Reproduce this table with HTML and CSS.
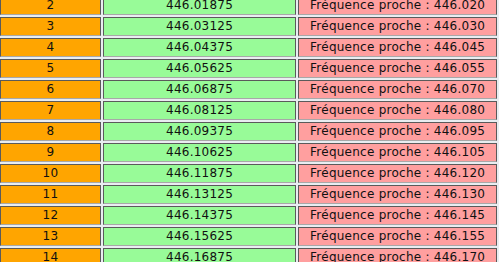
FILE: index.html
```html
<!DOCTYPE html>
<html lang="fr">
<head>
<meta charset="utf-8">
<title>Fréquences</title>
<link rel="stylesheet" href="styles.css">
</head>
<body>
<table class="freq">
<tbody>
<tr><td class="num">2</td><td class="val">446.01875</td><td class="near">Fréquence proche : 446.020</td></tr>
<tr><td class="num">3</td><td class="val">446.03125</td><td class="near">Fréquence proche : 446.030</td></tr>
<tr><td class="num">4</td><td class="val">446.04375</td><td class="near">Fréquence proche : 446.045</td></tr>
<tr><td class="num">5</td><td class="val">446.05625</td><td class="near">Fréquence proche : 446.055</td></tr>
<tr><td class="num">6</td><td class="val">446.06875</td><td class="near">Fréquence proche : 446.070</td></tr>
<tr><td class="num">7</td><td class="val">446.08125</td><td class="near">Fréquence proche : 446.080</td></tr>
<tr><td class="num">8</td><td class="val">446.09375</td><td class="near">Fréquence proche : 446.095</td></tr>
<tr><td class="num">9</td><td class="val">446.10625</td><td class="near">Fréquence proche : 446.105</td></tr>
<tr><td class="num">10</td><td class="val">446.11875</td><td class="near">Fréquence proche : 446.120</td></tr>
<tr><td class="num">11</td><td class="val">446.13125</td><td class="near">Fréquence proche : 446.130</td></tr>
<tr><td class="num">12</td><td class="val">446.14375</td><td class="near">Fréquence proche : 446.145</td></tr>
<tr><td class="num">13</td><td class="val">446.15625</td><td class="near">Fréquence proche : 446.155</td></tr>
<tr><td class="num">14</td><td class="val">446.16875</td><td class="near">Fréquence proche : 446.170</td></tr>
</tbody>
</table>
</body>
</html>
```
FILE: styles.css
```css
html, body {
  margin: 0;
  padding: 0;
  background: #e9edf1;
  overflow: hidden;
}
.freq {
  border-collapse: separate;
  border-spacing: 2px;
  margin: -6px 0 0 -2px;
  font-family: "DejaVu Sans", Verdana, sans-serif;
  font-size: 12px;
  line-height: 15px;
  letter-spacing: 0.25px;
  color: #111;
}
.freq td {
  padding: 1px;
  text-align: center;
  border: 1px solid #5a5a5a;
  border-bottom-color: #a8a8a8;
  white-space: nowrap;
}
.num {
  width: 98px;
  background: #ffa500;
}
.val {
  width: 191px;
  background: #98fb98;
}
.near {
  width: 195px;
  background: #ff9f9f;
}
```
